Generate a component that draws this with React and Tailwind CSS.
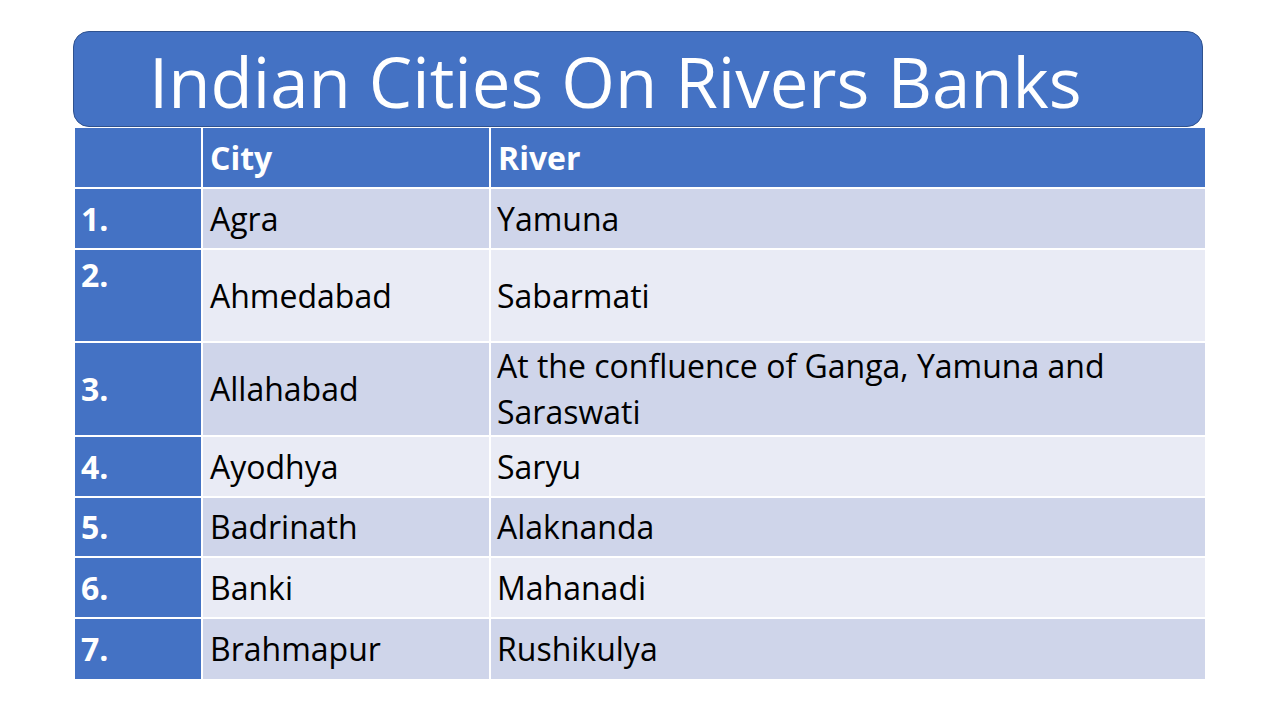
import React from "react";

const rows = [
  { n: "1.", city: "Agra", river: "Yamuna", h: "h-[59px]", bg: "bg-[#cfd5ea]" },
  { n: "2.", city: "Ahmedabad", river: "Sabarmati", h: "h-[91px]", bg: "bg-[#e9ebf5]", top: true },
  { n: "3.", city: "Allahabad", river: ["At the confluence of Ganga, Yamuna and", "Saraswati"], h: "h-[92px]", bg: "bg-[#cfd5ea]" },
  { n: "4.", city: "Ayodhya", river: "Saryu", h: "h-[59px]", bg: "bg-[#e9ebf5]" },
  { n: "5.", city: "Badrinath", river: "Alaknanda", h: "h-[58px]", bg: "bg-[#cfd5ea]" },
  { n: "6.", city: "Banki", river: "Mahanadi", h: "h-[59px]", bg: "bg-[#e9ebf5]" },
  { n: "7.", city: "Brahmapur", river: "Rushikulya", h: "h-[60px]", bg: "bg-[#cfd5ea]" },
];

export default function App() {
  return (
    <div className="w-[1280px] h-[720px] bg-white pt-[31px] font-['Open_Sans','Lato',sans-serif]">
      {/* title banner */}
      <div className="ml-[73px] w-[1130px] h-[96px] rounded-[16px] bg-[#4472c4] border border-[#2f528f] flex items-center pl-[75px]">
        <h1 className="text-white text-[69px] leading-none pt-[4px]">Indian Cities On Rivers Banks</h1>
      </div>

      {/* table */}
      <div className="ml-[75px] mt-[1px] w-[1130px] grid grid-cols-[126px_286px_714px] gap-[2px] bg-white text-[32px]">
        <div className="h-[59px] bg-[#4472c4]" />
        <div className="h-[59px] bg-[#4472c4] flex items-center px-[7px] text-white font-bold">City</div>
        <div className="h-[59px] bg-[#4472c4] flex items-center px-[7px] text-white font-bold">River</div>

        {rows.map((r) => (
          <React.Fragment key={r.n}>
            <div className={`${r.h} bg-[#4472c4] flex ${r.top ? "items-start pt-[1px]" : "items-center"} px-[6px] text-white font-bold`}>
              {r.n}
            </div>
            <div className={`${r.h} ${r.bg} flex items-center px-[7px] text-black`}>{r.city}</div>
            <div className={`${r.h} ${r.bg} flex items-center px-[6px] text-black`}>
              {Array.isArray(r.river) ? (
                <div className="leading-[46px]">
                  {r.river[0]}
                  <br />
                  {r.river[1]}
                </div>
              ) : (
                r.river
              )}
            </div>
          </React.Fragment>
        ))}
      </div>
    </div>
  );
}
